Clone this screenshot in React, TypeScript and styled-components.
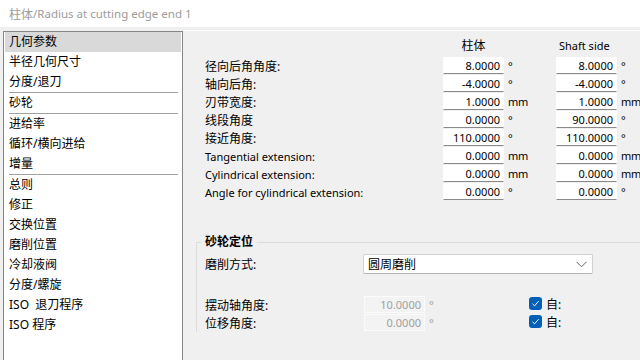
import React from 'react';
import styled, { createGlobalStyle } from 'styled-components';

const GlobalStyle = createGlobalStyle`
  html, body {
    margin: 0;
    padding: 0;
  }

  body {
    width: 640px;
    height: 360px;
    overflow: hidden;
    background: #ffffff;
    font-family: "Noto Sans", "Noto Sans CJK SC", sans-serif;
    font-size: 12px;
    color: #000000;
  }
`;

const Window = styled.div`
  width: 640px;
  height: 360px;
  display: flex;
  flex-direction: column;
  overflow: hidden;
`;

const TitleBar = styled.div`
  height: 27px;
  flex: none;
  display: flex;
  align-items: center;
  padding-left: 9px;
  background: #ffffff;
  color: #9c9c9c;
  font-size: 12px;
  white-space: pre;
`;

const Latin = styled.span<{ $size?: number }>`
  font-size: ${(p) => p.$size || 11}px;
`;

const Body = styled.div`
  flex: 1;
  display: flex;
  min-height: 0;
  background: #f0f0f0;
  padding-top: 3px;
`;

const NavList = styled.ul`
  list-style: none;
  margin: 1px 0 0 3px;
  padding: 0 1px;
  width: 176px;
  flex: none;
  background: #ffffff;
  border: 1px solid #858585;
  border-bottom: none;
`;

const NavItem = styled.li<{ $selected?: boolean }>`
  height: 20px;
  line-height: 20px;
  padding-left: 4px;
  white-space: pre;
  background: ${(p) => (p.$selected ? '#d9d9d9' : 'transparent')};
`;

const NavSeparator = styled.li`
  height: 1px;
  margin: 0 3px 0 4px;
  background: #a0a0a0;
`;

const FormPanel = styled.div`
  flex: 1;
  margin-left: 1px;
  border-top: 1px solid #ffffff;
  min-width: 0;
`;

const ParamBlock = styled.div`
  padding: 5px 0 0 21px;
`;

const HeaderRow = styled.div`
  display: flex;
  height: 18px;
  align-items: center;
  margin-bottom: 3px;
`;

const HeaderCell = styled.div<{ $width: number; $align?: string; $pad?: number }>`
  width: ${(p) => p.$width}px;
  flex: none;
  text-align: ${(p) => p.$align || 'left'};
  padding-left: ${(p) => p.$pad || 0}px;
  box-sizing: border-box;
  white-space: nowrap;
`;

const ParamRow = styled.div`
  display: flex;
  height: 18px;
  align-items: flex-start;
`;

const Label = styled.div<{ $width: number; $latin?: boolean }>`
  width: ${(p) => p.$width}px;
  flex: none;
  height: 17px;
  line-height: 17px;
  padding-top: 1px;
  white-space: nowrap;
  font-size: ${(p) => (p.$latin ? 11 : 12)}px;
`;

const NumberBox = styled.div<{ $disabled?: boolean }>`
  width: 61px;
  height: 17px;
  flex: none;
  box-sizing: border-box;
  padding-right: 3px;
  text-align: right;
  font-size: 11px;
  line-height: 16px;
  background: ${(p) => (p.$disabled ? '#f3f3f3' : '#ffffff')};
  color: ${(p) => (p.$disabled ? '#a0a0a0' : '#000000')};
  border: 1px solid ${(p) => (p.$disabled ? '#fbfbfb' : '#ffffff')};
  border-bottom-color: ${(p) => (p.$disabled ? '#fbfbfb' : '#8a8a8a')};
`;

const Unit = styled.div<{ $width: number; $muted?: boolean }>`
  width: ${(p) => p.$width}px;
  flex: none;
  box-sizing: border-box;
  padding-left: 4px;
  font-size: 11px;
  letter-spacing: -0.3px;
  line-height: 17px;
  white-space: nowrap;
  color: ${(p) => (p.$muted ? '#a0a0a0' : '#000000')};
`;

const Group = styled.fieldset`
  margin: 33px 0 0 12px;
  padding: 0 0 0 8px;
  border: 1px solid #dcdcdc;
  border-right: none;
  border-bottom: none;
  min-width: 0;
`;

const Legend = styled.legend`
  padding: 0 4px;
  margin-left: -4px;
  font-weight: bold;
  font-size: 12px;
  line-height: 16px;
`;

const SelectRow = styled.div`
  display: flex;
  align-items: center;
  height: 20px;
  margin-top: 4px;
`;

const Select = styled.div`
  width: 230px;
  height: 20px;
  flex: none;
  box-sizing: border-box;
  display: flex;
  align-items: center;
  justify-content: space-between;
  padding: 0 5px 0 4px;
  background: #ffffff;
  border: 1px solid #d0d0d0;
  border-bottom-color: #b4b4b4;
  border-radius: 2px;
`;

const AngleBlock = styled.div`
  margin-top: 22px;
`;

const Check = styled.div`
  width: 13px;
  height: 13px;
  flex: none;
  margin-top: 1px;
  border-radius: 3px;
  background: #005fb8;
  display: flex;
  align-items: center;
  justify-content: center;
`;

const CheckLabel = styled.div`
  margin-left: 4px;
  line-height: 17px;
`;

type Nav = { text: string; latin?: string } | null;

const navItems: Nav[] = [
  { text: '几何参数' },
  { text: '半径几何尺寸' },
  { text: '分度/退刀' },
  null,
  { text: '砂轮' },
  null,
  { text: '进给率' },
  { text: '循环/横向进给' },
  { text: '增量' },
  null,
  { text: '总则' },
  { text: '修正' },
  { text: '交换位置' },
  { text: '磨削位置' },
  { text: '冷却液阀' },
  { text: '分度/螺旋' },
  { latin: 'ISO  ', text: '退刀程序' },
  { latin: 'ISO ', text: '程序' },
];

const params = [
  { label: '径向后角角度:', a: '8.0000', b: '8.0000', unit: '°' },
  { label: '轴向后角:', a: '-4.0000', b: '-4.0000', unit: '°' },
  { label: '刃带宽度:', a: '1.0000', b: '1.0000', unit: 'mm' },
  { label: '线段角度', a: '0.0000', b: '90.0000', unit: '°' },
  { label: '接近角度:', a: '110.0000', b: '110.0000', unit: '°' },
  { label: 'Tangential extension:', a: '0.0000', b: '0.0000', unit: 'mm', latin: true },
  { label: 'Cylindrical extension:', a: '0.0000', b: '0.0000', unit: 'mm', latin: true },
  { label: 'Angle for cylindrical extension:', a: '0.0000', b: '0.0000', unit: '°', latin: true },
];

const angles = [
  { label: '摆动轴角度:', value: '10.0000' },
  { label: '位移角度:', value: '0.0000' },
];

const CheckIcon = () => (
  <svg width="9" height="9" viewBox="0 0 9 9">
    <path d="M1.5 4.8 L3.6 6.8 L7.6 2.2" fill="none" stroke="#ffffff" strokeWidth="1" />
  </svg>
);

const Chevron = () => (
  <svg width="11" height="7" viewBox="0 0 11 7">
    <path d="M0.5 0.8 L5.5 5.8 L10.5 0.8" fill="none" stroke="#606060" strokeWidth="1" />
  </svg>
);

const App: React.FC = () => {
  return (
    <>
      <GlobalStyle />
      <Window>
        <TitleBar>
          柱体<Latin $size={11.5}>/Radius at cutting edge end 1</Latin>
        </TitleBar>
        <Body>
          <NavList>
            {navItems.map((item, i) =>
              item === null ? (
                <NavSeparator key={i} />
              ) : (
                <NavItem key={i} $selected={i === 0}>
                  {item.latin && <Latin $size={12}>{item.latin}</Latin>}
                  {item.text}
                </NavItem>
              ),
            )}
          </NavList>
          <FormPanel>
            <ParamBlock>
              <HeaderRow>
                <HeaderCell $width={238} />
                <HeaderCell $width={61} $align="center">
                  柱体
                </HeaderCell>
                <HeaderCell $width={52} />
                <HeaderCell $width={61} $pad={3}>
                  <Latin>Shaft side</Latin>
                </HeaderCell>
              </HeaderRow>
              {params.map((p) => (
                <ParamRow key={p.label}>
                  <Label $width={238} $latin={p.latin}>
                    {p.label}
                  </Label>
                  <NumberBox>{p.a}</NumberBox>
                  <Unit $width={52}>{p.unit}</Unit>
                  <NumberBox>{p.b}</NumberBox>
                  <Unit $width={23}>{p.unit}</Unit>
                </ParamRow>
              ))}
            </ParamBlock>
            <Group>
              <Legend>砂轮定位</Legend>
              <SelectRow>
                <Label $width={158}>磨削方式:</Label>
                <Select>
                  <span>圆周磨削</span>
                  <Chevron />
                </Select>
              </SelectRow>
              <AngleBlock>
                {angles.map((a) => (
                  <ParamRow key={a.label}>
                    <Label $width={159}>{a.label}</Label>
                    <NumberBox $disabled>{a.value}</NumberBox>
                    <Unit $width={104} $muted>
                      °
                    </Unit>
                    <Check>
                      <CheckIcon />
                    </Check>
                    <CheckLabel>自:</CheckLabel>
                  </ParamRow>
                ))}
              </AngleBlock>
            </Group>
          </FormPanel>
        </Body>
      </Window>
    </>
  );
};

export default App;
